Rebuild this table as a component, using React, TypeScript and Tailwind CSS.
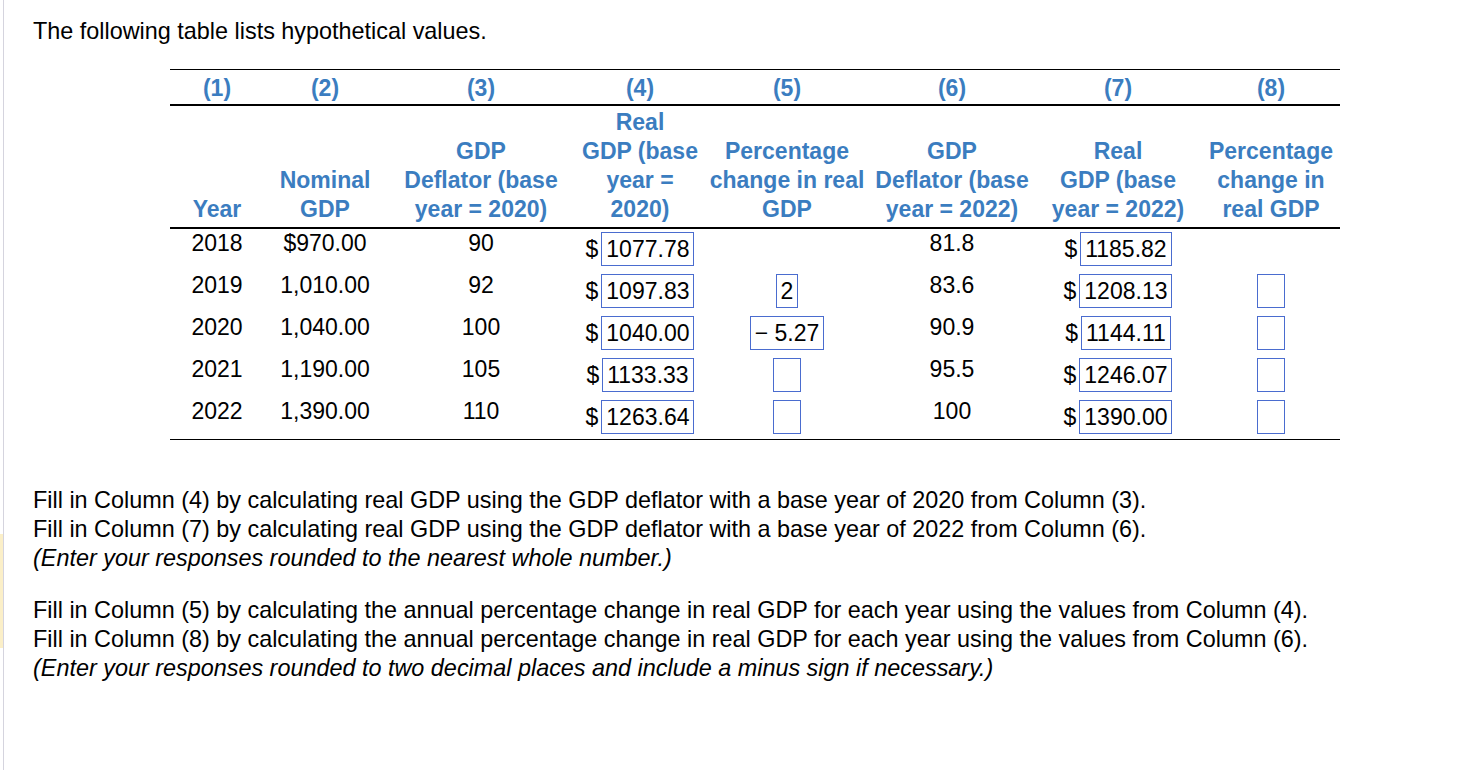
import React from 'react'

const widths = ['w-[94px]', 'w-[122px]', 'w-[190px]', 'w-[128px]', 'w-[166px]', 'w-[164px]', 'w-[168px]', 'w-[138px]']

const headers: string[][] = [
  ['Year'],
  ['Nominal', 'GDP'],
  ['GDP', 'Deflator (base', 'year = 2020)'],
  ['Real', 'GDP (base', 'year =', '2020)'],
  ['Percentage', 'change in real', 'GDP'],
  ['GDP', 'Deflator (base', 'year = 2022)'],
  ['Real', 'GDP (base', 'year = 2022)'],
  ['Percentage', 'change in', 'real GDP'],
]

type Row = {
  year: string
  nominal: string
  defl20: string
  real20: string
  pct5: string | null
  defl22: string
  real22: string
  pct8: string | null
}

const rows: Row[] = [
  { year: '2018', nominal: '$970.00', defl20: '90', real20: '1077.78', pct5: null, defl22: '81.8', real22: '1185.82', pct8: null },
  { year: '2019', nominal: '1,010.00', defl20: '92', real20: '1097.83', pct5: '2', defl22: '83.6', real22: '1208.13', pct8: '' },
  { year: '2020', nominal: '1,040.00', defl20: '100', real20: '1040.00', pct5: '\u2212 5.27', defl22: '90.9', real22: '1144.11', pct8: '' },
  { year: '2021', nominal: '1,190.00', defl20: '105', real20: '1133.33', pct5: '', defl22: '95.5', real22: '1246.07', pct8: '' },
  { year: '2022', nominal: '1,390.00', defl20: '110', real20: '1263.64', pct5: '', defl22: '100', real22: '1390.00', pct8: '' },
]

function Box({ value }: { value: string }) {
  if (value === '') {
    return <div className="mt-[3px] h-[34px] w-[28px] border border-[#4a6ccf]" />
  }
  return (
    <div className="mt-[3px] flex h-[34px] items-center border border-[#4a6ccf] px-[4px]">{value}</div>
  )
}

function Money({ value }: { value: string }) {
  return (
    <div className="flex items-start">
      <span className="mt-[3px] flex h-[34px] items-center pr-[3px]">$</span>
      <Box value={value} />
    </div>
  )
}

function Cell({ i, children }: { i: number; children?: React.ReactNode }) {
  return <div className={`${widths[i]} flex justify-center`}>{children}</div>
}

export default function App() {
  return (
    <div className="flex min-h-[770px] bg-white font-['Liberation_Sans',Arial,sans-serif] text-[23px] leading-[29px] text-black">
      <div className="flex w-[3px] flex-col">
        <div className="h-[534px]" />
        <div className="h-[114px] bg-[#fbefc8]" />
      </div>
      <div className="flex-1 border-l border-[#d5d4de] pl-[29px] pt-[17px]">
        <p className="text-[23.4px]">The following table lists hypothetical values.</p>

        <div className="ml-[137px] mt-[23px] w-[1170px] border-t border-black">
          {/* column numbers */}
          <div className="flex border-b-2 border-black pb-[1px] pt-[4px] font-bold text-[#3b7dc0]">
            {widths.map((_, i) => (
              <Cell key={i} i={i}>({i + 1})</Cell>
            ))}
          </div>

          {/* column titles */}
          <div className="flex h-[123px] border-b-2 border-black pb-[3px] font-bold text-[#3b7dc0]">
            {headers.map((lines, i) => (
              <div key={i} className={`${widths[i]} flex flex-col items-center justify-end text-center`}>
                {lines.map((l) => (
                  <span key={l} className="whitespace-nowrap">{l}</span>
                ))}
              </div>
            ))}
          </div>

          {/* data */}
          <div className="border-b border-black">
            {rows.map((r) => (
              <div key={r.year} className="flex h-[42px] items-start">
                <Cell i={0}>{r.year}</Cell>
                <Cell i={1}>{r.nominal}</Cell>
                <Cell i={2}>{r.defl20}</Cell>
                <Cell i={3}><Money value={r.real20} /></Cell>
                <Cell i={4}>{r.pct5 !== null && <Box value={r.pct5} />}</Cell>
                <Cell i={5}>{r.defl22}</Cell>
                <Cell i={6}><Money value={r.real22} /></Cell>
                <Cell i={7}>{r.pct8 !== null && <Box value={r.pct8} />}</Cell>
              </div>
            ))}
          </div>
        </div>

        <p className="mt-[46px] text-[23.4px]">
          Fill in Column (4) by calculating real GDP using the GDP deflator with a base year of 2020 from Column (3).
          <br />
          Fill in Column (7) by calculating real GDP using the GDP deflator with a base year of 2022 from Column (6).
          <br />
          <i>(Enter your responses rounded to the nearest whole number.)</i>
        </p>
        <p className="mt-[23px] text-[23.4px]">
          Fill in Column (5) by calculating the annual percentage change in real GDP for each year using the values from Column (4).
          <br />
          Fill in Column (8) by calculating the annual percentage change in real GDP for each year using the values from Column (6).
          <br />
          <i>(Enter your responses rounded to two decimal places and include a minus sign if necessary.)</i>
        </p>
      </div>
    </div>
  )
}
